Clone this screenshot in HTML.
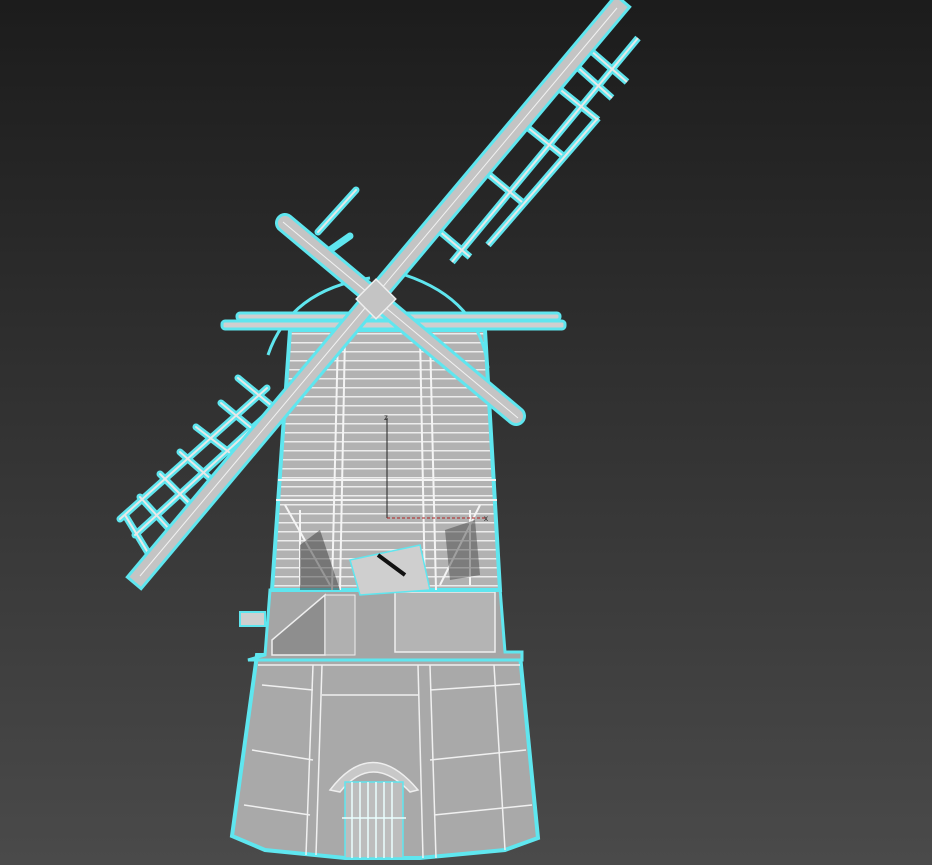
<!DOCTYPE html>
<html><head><style>
html,body{margin:0;padding:0;width:932px;height:865px;overflow:hidden;background:#2e2e2e}
svg{display:block}
</style></head><body>
<svg width="932" height="865" viewBox="0 0 932 865" xmlns="http://www.w3.org/2000/svg">
<defs>
<linearGradient id="bg" x1="0" y1="0" x2="0" y2="1">
<stop offset="0" stop-color="#1c1c1c"/><stop offset="1" stop-color="#4a4a4a"/>
</linearGradient>
<pattern id="hl" width="8" height="9" patternUnits="userSpaceOnUse">
<rect width="8" height="9" fill="#b2b2b2"/><rect y="0" width="8" height="1.5" fill="#ececec"/>
</pattern>
</defs>
<rect width="932" height="865" fill="url(#bg)"/>

<!-- lattice of upper-right sail -->
<g id="ur" stroke-linecap="butt" fill="none">
<g stroke="#5fe6ef" stroke-width="7">
<line x1="638" y1="38" x2="452" y2="262"/>
<line x1="598" y1="118" x2="488" y2="245"/>
<line x1="590" y1="50" x2="627" y2="82"/><line x1="575" y1="65" x2="612" y2="98"/>
<line x1="557" y1="87" x2="598" y2="120"/><line x1="527" y1="127" x2="562" y2="155"/>
<line x1="487" y1="173" x2="522" y2="202"/><line x1="438" y1="230" x2="470" y2="257"/>
</g>
<g stroke="#e8e8e8" stroke-width="2">
<line x1="638" y1="38" x2="452" y2="262"/>
<line x1="598" y1="118" x2="488" y2="245"/>
<line x1="590" y1="50" x2="627" y2="82"/><line x1="575" y1="65" x2="612" y2="98"/>
<line x1="557" y1="87" x2="598" y2="120"/><line x1="527" y1="127" x2="562" y2="155"/>
<line x1="487" y1="173" x2="522" y2="202"/><line x1="438" y1="230" x2="470" y2="257"/>
</g>
</g>
<!-- lattice lower-left sail -->
<g fill="none" stroke-linecap="round">
<g stroke="#5fe6ef" stroke-width="7">
<line x1="120" y1="519" x2="267" y2="388"/>
<line x1="135" y1="535" x2="270" y2="412"/>
<line x1="272" y1="406" x2="238" y2="378"/><line x1="255" y1="431" x2="221" y2="403"/>
<line x1="234" y1="456" x2="196" y2="427"/><line x1="213" y1="481" x2="180" y2="452"/>
<line x1="192" y1="506" x2="160" y2="474"/><line x1="171" y1="531" x2="140" y2="497"/>
<line x1="150" y1="556" x2="125" y2="515"/>
<line x1="318" y1="232" x2="356" y2="190"/><line x1="330" y1="250" x2="350" y2="236"/>
</g>
<g stroke="#e8e8e8" stroke-width="2">
<line x1="120" y1="519" x2="267" y2="388"/>
<line x1="135" y1="535" x2="270" y2="412"/>
<line x1="272" y1="406" x2="238" y2="378"/><line x1="255" y1="431" x2="221" y2="403"/>
<line x1="234" y1="456" x2="196" y2="427"/><line x1="213" y1="481" x2="180" y2="452"/>
<line x1="192" y1="506" x2="160" y2="474"/><line x1="171" y1="531" x2="140" y2="497"/>
<line x1="150" y1="556" x2="125" y2="515"/>
<line x1="318" y1="232" x2="356" y2="190"/>
</g>
</g>

<!-- lower tower -->
<polygon points="257,655 520,655 538,838 505,850 420,858 345,858 265,850 232,836" fill="#a9a9a9" stroke="#5fe6ef" stroke-width="4"/>
<g stroke="#f0f0f0" stroke-width="1.5" fill="none">
<line x1="258" y1="665" x2="520" y2="665"/>
<line x1="313" y1="665" x2="306" y2="855"/><line x1="322" y1="665" x2="316" y2="855"/>
<line x1="418" y1="665" x2="423" y2="858"/><line x1="430" y1="665" x2="436" y2="858"/>
<line x1="494" y1="665" x2="505" y2="850"/>
<line x1="262" y1="685" x2="313" y2="690"/><line x1="430" y1="690" x2="520" y2="684"/>
<line x1="252" y1="750" x2="313" y2="760"/><line x1="430" y1="760" x2="526" y2="750"/>
<line x1="244" y1="805" x2="310" y2="815"/><line x1="434" y1="815" x2="532" y2="805"/>
<line x1="322" y1="695" x2="418" y2="695"/>
</g>
<!-- door -->
<path d="M330,790 Q372,735 418,790 L410,792 Q372,752 340,792 Z" fill="#c8c8c8" stroke="#eee" stroke-width="1.5"/>
<rect x="345" y="782" width="58" height="76" fill="#bdbdbd" stroke="#5fe6ef" stroke-width="1.5"/>
<g stroke="#eaffff" stroke-width="1.5">
<line x1="352" y1="782" x2="352" y2="858"/><line x1="360" y1="782" x2="360" y2="858"/><line x1="368" y1="782" x2="368" y2="858"/>
<line x1="376" y1="782" x2="376" y2="858"/><line x1="384" y1="782" x2="384" y2="858"/><line x1="392" y1="782" x2="392" y2="858"/>
<line x1="342" y1="818" x2="406" y2="818"/>
</g>

<!-- middle section -->
<polygon points="270,590 500,588 505,652 522,652 522,660 248,660 265,655" fill="#a5a5a5" stroke="#5fe6ef" stroke-width="3"/>
<rect x="395" y="592" width="100" height="60" fill="#b4b4b4" stroke="#eee" stroke-width="1.5"/>
<polygon points="272,640 325,595 325,655 272,655" fill="#8e8e8e" stroke="#eee" stroke-width="1.5"/>
<rect x="325" y="595" width="30" height="60" fill="#b0b0b0" stroke="#eee" stroke-width="1"/>
<rect x="240" y="612" width="25" height="14" fill="#cfcfcf" stroke="#5fe6ef" stroke-width="2"/>

<!-- upper tower -->
<polygon points="290,330 485,330 500,590 272,590" fill="url(#hl)" stroke="#5fe6ef" stroke-width="4"/>
<g stroke="#f4f4f4" stroke-width="2" fill="none">
<line x1="338" y1="335" x2="332" y2="590"/><line x1="345" y1="335" x2="340" y2="590"/>
<line x1="420" y1="335" x2="425" y2="590"/><line x1="430" y1="335" x2="436" y2="590"/>
<line x1="278" y1="480" x2="496" y2="480"/><line x1="276" y1="500" x2="497" y2="500"/>
<line x1="285" y1="505" x2="330" y2="585"/><line x1="480" y1="505" x2="440" y2="585"/>
<line x1="300" y1="510" x2="300" y2="585"/><line x1="470" y1="510" x2="470" y2="585"/>
</g>
<polygon points="300,545 320,530 340,590 300,590" fill="#3a3a3a" opacity="0.5"/>
<polygon points="445,530 475,520 480,575 450,580" fill="#3a3a3a" opacity="0.45"/>
<polygon points="350,560 420,545 430,590 360,595" fill="#cfcfcf" stroke="#5fe6ef" stroke-width="1.5"/>
<line x1="378" y1="555" x2="405" y2="575" stroke="#111" stroke-width="4"/>
<!-- gizmo -->
<line x1="387" y1="418" x2="387" y2="518" stroke="#222" stroke-width="1"/>
<line x1="387" y1="518" x2="487" y2="518" stroke="#b02020" stroke-width="1" stroke-dasharray="3,2"/>
<text x="384" y="420" font-family="Liberation Sans, sans-serif" font-size="8" fill="#222">z</text>
<text x="484" y="521" font-family="Liberation Sans, sans-serif" font-size="8" fill="#222">x</text>

<!-- cap arcs -->
<g stroke="#5fe6ef" stroke-width="3" fill="none">
<path d="M268,355 Q290,290 370,278"/><path d="M488,368 Q480,300 405,275"/>
</g>
<!-- platform -->
<rect x="237" y="313" width="323" height="7" rx="3" fill="#cfcfcf" stroke="#5fe6ef" stroke-width="3"/>
<rect x="222" y="321" width="343" height="8" rx="3" fill="#cfcfcf" stroke="#5fe6ef" stroke-width="3"/>

<!-- blades -->
<line x1="617" y1="8" x2="140" y2="576" stroke="#5fe6ef" stroke-width="21" stroke-linecap="square"/>
<line x1="617" y1="8" x2="140" y2="576" stroke="#c4c4c4" stroke-width="15" stroke-linecap="square"/>
<line x1="285" y1="223" x2="516" y2="416" stroke="#5fe6ef" stroke-width="20" stroke-linecap="round"/>
<line x1="285" y1="223" x2="516" y2="416" stroke="#c4c4c4" stroke-width="14" stroke-linecap="round"/>
<g stroke="#f2f2f2" stroke-width="1">
<line x1="617" y1="8" x2="140" y2="576"/>
<line x1="283" y1="222" x2="518" y2="418"/>
</g>
<rect x="362" y="285" width="28" height="28" fill="#c4c4c4" stroke="#eee" stroke-width="1.5" transform="rotate(45 376 299)"/>
</svg>
</body></html>
